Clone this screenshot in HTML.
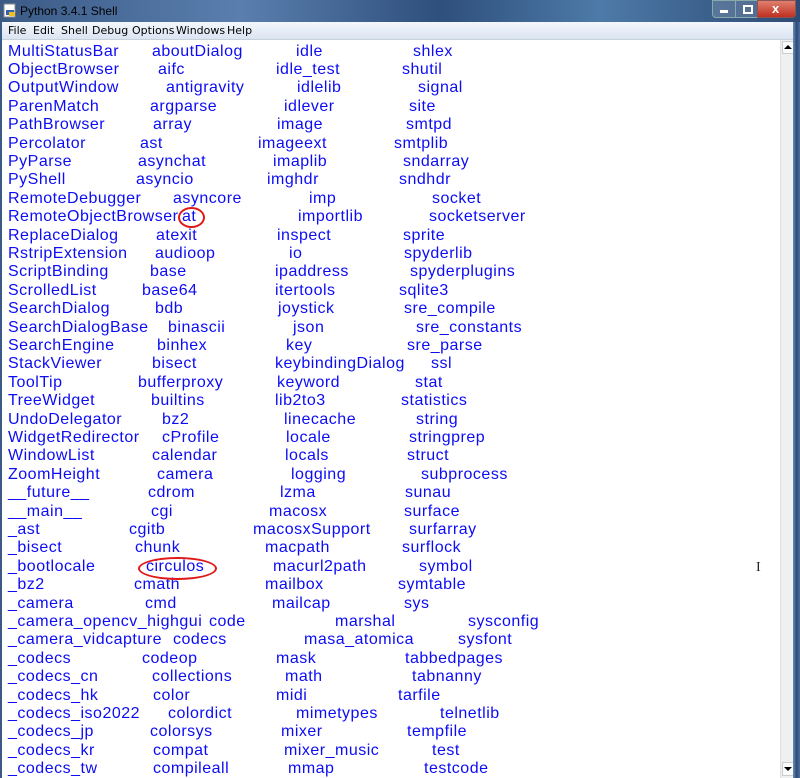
<!DOCTYPE html>
<html><head><meta charset="utf-8"><style>
html,body{margin:0;padding:0;width:800px;height:778px;overflow:hidden;background:#fff}
#title{position:absolute;left:0;top:0;width:800px;height:22px;background:linear-gradient(90deg,#3b5a86,#5a7fae 30%,#2f4f7c 55%,#4d7aa8 75%,#2e4a74);}
#title span{position:absolute;left:20px;top:4px;font:12px "Liberation Sans",sans-serif;color:#000}
#menu{position:absolute;left:2px;top:22px;width:791px;height:17px;background:linear-gradient(#f4f7fc,#dbe4f2);border-bottom:1px solid #c8d0dc;font:11px "DejaVu Sans",sans-serif}
#menu span{position:absolute;top:2px}
#lb{position:absolute;left:0;top:22px;width:2px;height:756px;background:#3a5a88}
#rb{position:absolute;left:793px;top:22px;width:7px;height:756px;background:linear-gradient(90deg,#6f8fb8,#2c4a78,#4d6f9d)}
#sb{position:absolute;left:780px;top:40px;width:13px;height:738px;background:#f0f0f0;border-left:1px solid #e0e0e0}
.t{position:absolute;font:16px "Liberation Sans",sans-serif;letter-spacing:0.5px;color:#0c0cf5;white-space:pre;line-height:18px}
.c{position:absolute;border:2px solid #e01818;border-radius:50%}
</style></head><body>
<div id="title"><svg style="position:absolute;left:3px;top:3px" width="14" height="15"><rect x="1" y="1" width="11" height="13" fill="#fff" stroke="#888"/><rect x="3" y="7" width="8" height="5" fill="#3060b0"/><rect x="6" y="9" width="6" height="4" fill="#f0c020"/></svg><span>Python 3.4.1 Shell</span>
<div style="position:absolute;left:712px;top:0;width:22px;height:16px;border:1px solid #8aa;border-radius:0 0 0 4px;background:rgba(255,255,255,.15)"><div style="position:absolute;left:7px;top:9px;width:8px;height:3px;background:#fff"></div></div>
<div style="position:absolute;left:735px;top:0;width:22px;height:16px;border:1px solid #8aa;background:rgba(255,255,255,.15)"><div style="position:absolute;left:7px;top:4px;width:6px;height:5px;border:2px solid #fff"></div></div>
<div style="position:absolute;left:757px;top:0;width:37px;height:16px;border:1px solid #855;border-radius:0 0 4px 0;background:linear-gradient(#e08070,#c03020)"><span style="left:14px;top:0;color:#fff;font-weight:bold;font-size:13px">x</span></div>
</div>
<div id="lb"></div>
<div id="menu"><span style="left:6px">File</span><span style="left:31px">Edit</span><span style="left:59px">Shell</span><span style="left:90px">Debug</span><span style="left:130px">Options</span><span style="left:174px">Windows</span><span style="left:225px">Help</span></div>
<div id="sb"><div style="position:absolute;left:1px;top:1px;width:11px;height:11px;border:1px solid #ccc;background:#fafafa"></div><div style="position:absolute;left:3px;top:5px;border-left:4px solid transparent;border-right:4px solid transparent;border-bottom:4px solid #000"></div>
<div style="position:absolute;left:1px;top:722px;width:11px;height:12px;border:1px solid #ccc;background:#fafafa"></div><div style="position:absolute;left:3px;top:727px;border-left:4px solid transparent;border-right:4px solid transparent;border-top:4px solid #000"></div></div>
<div id="rb"></div>
<div id="txt"></div>
<div class="c" style="left:178px;top:207px;width:23px;height:17px"></div>
<div class="c" style="left:138px;top:557px;width:75px;height:19px"></div>
<div style="position:absolute;left:756px;top:560px;font:14px 'Liberation Serif',serif;color:#222">I</div>
<script>
var R=[["MultiStatusBar",8,"aboutDialog",152,"idle",296,"shlex",413],
["ObjectBrowser",8,"aifc",158,"idle_test",276,"shutil",402],
["OutputWindow",8,"antigravity",166,"idlelib",297,"signal",418],
["ParenMatch",8,"argparse",150,"idlever",284,"site",409],
["PathBrowser",8,"array",153,"image",277,"smtpd",406],
["Percolator",8,"ast",140,"imageext",258,"smtplib",394],
["PyParse",8,"asynchat",138,"imaplib",273,"sndarray",403],
["PyShell",8,"asyncio",136,"imghdr",267,"sndhdr",399],
["RemoteDebugger",8,"asyncore",173,"imp",309,"socket",432],
["RemoteObjectBrowser",8,"at",182,"importlib",298,"socketserver",429],
["ReplaceDialog",8,"atexit",156,"inspect",277,"sprite",403],
["RstripExtension",8,"audioop",155,"io",289,"spyderlib",404],
["ScriptBinding",8,"base",150,"ipaddress",275,"spyderplugins",410],
["ScrolledList",8,"base64",142,"itertools",275,"sqlite3",399],
["SearchDialog",8,"bdb",155,"joystick",278,"sre_compile",404],
["SearchDialogBase",8,"binascii",168,"json",293,"sre_constants",416],
["SearchEngine",8,"binhex",157,"key",286,"sre_parse",407],
["StackViewer",8,"bisect",152,"keybindingDialog",275,"ssl",431],
["ToolTip",8,"bufferproxy",138,"keyword",277,"stat",415],
["TreeWidget",8,"builtins",151,"lib2to3",275,"statistics",401],
["UndoDelegator",8,"bz2",162,"linecache",284,"string",416],
["WidgetRedirector",8,"cProfile",162,"locale",286,"stringprep",409],
["WindowList",8,"calendar",152,"locals",285,"struct",407],
["ZoomHeight",8,"camera",157,"logging",291,"subprocess",421],
["__future__",8,"cdrom",148,"lzma",280,"sunau",405],
["__main__",8,"cgi",151,"macosx",269,"surface",404],
["_ast",8,"cgitb",129,"macosxSupport",253,"surfarray",409],
["_bisect",8,"chunk",135,"macpath",265,"surflock",402],
["_bootlocale",8,"circulos",146,"macurl2path",273,"symbol",419],
["_bz2",8,"cmath",134,"mailbox",265,"symtable",398],
["_camera",8,"cmd",145,"mailcap",272,"sys",404],
["_camera_opencv_highgui",8,"code",209,"marshal",335,"sysconfig",468],
["_camera_vidcapture",8,"codecs",173,"masa_atomica",304,"sysfont",458],
["_codecs",8,"codeop",142,"mask",276,"tabbedpages",405],
["_codecs_cn",8,"collections",152,"math",285,"tabnanny",412],
["_codecs_hk",8,"color",153,"midi",276,"tarfile",398],
["_codecs_iso2022",8,"colordict",168,"mimetypes",296,"telnetlib",440],
["_codecs_jp",8,"colorsys",150,"mixer",281,"tempfile",407],
["_codecs_kr",8,"compat",153,"mixer_music",284,"test",432],
["_codecs_tw",8,"compileall",153,"mmap",288,"testcode",424]];
var h="";R.forEach(function(r,i){var y=(42.5+i*18.4).toFixed(1);for(var k=0;k<8;k+=2)h+='<div class="t" style="left:'+r[k+1]+'px;top:'+y+'px">'+r[k]+'</div>';});
document.getElementById("txt").innerHTML=h;
</script>
</body></html>
